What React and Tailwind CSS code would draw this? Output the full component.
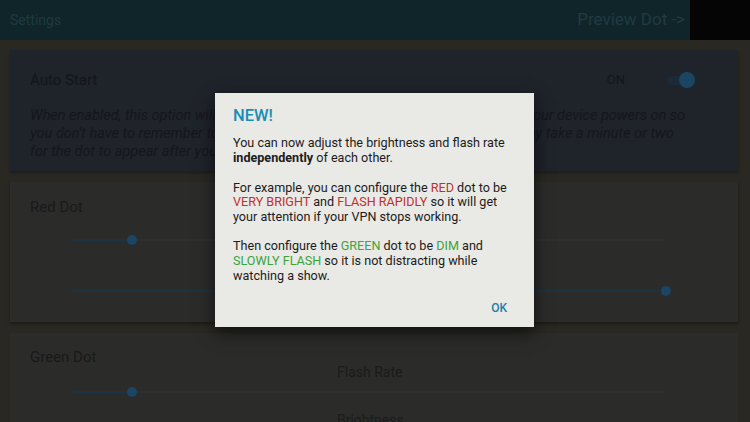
import React from "react";

function Slider({ pos, extra = "" }) {
  return (
    <div className={`relative h-[10px] ml-[62px] w-[594px] ${extra}`}>
      <div className="absolute left-0 right-0 top-[4px] h-[2px] bg-[#2e3030]" />
      <div className="absolute left-0 top-[4px] h-[2px] bg-[#1b3244]" style={{ width: pos }} />
      <div className="absolute top-0 w-[10px] h-[10px] rounded-full bg-[#1b4563]" style={{ left: pos - 5 }} />
    </div>
  );
}

export default function App() {
  return (
    <div className="relative w-[750px] h-[422px] overflow-hidden bg-[#292823]" style={{ fontFamily: "Roboto, 'Noto Sans', sans-serif" }}>
      {/* top bar */}
      <div className="flex h-[40px]">
        <div className="flex-1 flex items-center justify-between bg-[#10252a] pl-[10px] pr-[5px]">
          <span className="text-[14px] text-[#1e3a40]">Settings</span>
          <span className="text-[17px] text-[#1f3b41]">Preview Dot -&gt;</span>
        </div>
        <div className="w-[60px] bg-[#050505]" />
      </div>

      <div className="flex flex-col gap-[11px] px-[10px] pt-[10px] pr-[12px]">
        {/* Auto start */}
        <div className="bg-[#1f232a] h-[121px] pl-[20px] pr-[40px] pt-[18px] shadow-[0_2px_3px_rgba(0,0,0,0.3)]">
          <div className="flex items-center justify-between h-[24px]">
            <span className="text-[15px] text-[#12151a]">Auto Start</span>
            <div className="flex items-center gap-[42px]">
              <span className="text-[13px] text-[#12151a]">ON</span>
              <div className="relative w-[28px] h-[14px] mr-[3px]">
                <div className="absolute left-0 top-[3px] w-[26px] h-[9px] rounded-full bg-[#1a2a38]" />
                <div className="absolute right-0 top-[-1px] w-[16px] h-[16px] rounded-full bg-[#1a4664]" />
              </div>
            </div>
          </div>
          <div className="mt-[15px] text-[14.5px] leading-[18px] italic text-[#14171c] whitespace-nowrap">
            <div>When enabled, this option will automatically start the Dot monitor service when your device powers on so</div>
            <div>you don't have to remember to start it manually every time. Please note that it may take a minute or two</div>
            <div>for the dot to appear after your device boots.</div>
          </div>
        </div>

        {/* Red dot */}
        <div className="bg-[#2b2b2a] h-[140px] pt-[15px] shadow-[0_2px_3px_rgba(0,0,0,0.35)]">
          <div className="pl-[20px] text-[15px] leading-[20px] text-[#191a1a]">Red Dot</div>
          <Slider pos={60} extra="mt-[18px]" />
          <Slider pos={594} extra="mt-[41px]" />
        </div>

        {/* Green dot */}
        <div className="bg-[#2b2b2a] h-[140px] pt-[14px] relative">
          <div className="pl-[20px] text-[15px] leading-[20px] text-[#191a1a]">Green Dot</div>
          <div className="absolute left-[327px] top-[29px] text-[14px] text-[#1a1b1b]">Flash Rate</div>
          <Slider pos={60} extra="mt-[20px]" />
          <div className="absolute left-[327px] top-[77px] text-[14px] text-[#1a1b1b]">Brightness</div>
        </div>
      </div>

      {/* dialog */}
      <div className="absolute left-[215px] top-[93px] w-[319px] h-[234px] bg-[#e9e9e5] shadow-[0_6px_16px_rgba(0,0,0,0.6)] pl-[18px] pr-[12px] pt-[12px]">
        <div className="text-[16.5px] font-medium text-[#1a8db5] leading-[22px]">NEW!</div>
        <div className="mt-[9px] text-[12.6px] leading-[14.8px] text-[#1c1c1c]">
          <p>You can now adjust the brightness and flash rate <b className="font-bold">independently</b> of each other.</p>
          <p className="mt-[15px]">
            For example, you can configure the <span className="text-[#c1302c]">RED</span> dot to be <span className="text-[#c1302c]">VERY BRIGHT</span> and <span className="text-[#c1302c]">FLASH RAPIDLY</span> so it will get your attention if your VPN stops working.
          </p>
          <p className="mt-[14px]">
            Then configure the <span className="text-[#3da43a]">GREEN</span> dot to be <span className="text-[#3da43a]">DIM</span> and <span className="text-[#3da43a]">SLOWLY FLASH</span> so it is not distracting while watching a show.
          </p>
        </div>
        <div className="absolute right-[27px] top-[206px] text-[12px] font-medium text-[#1b7fae]">OK</div>
      </div>
    </div>
  );
}
